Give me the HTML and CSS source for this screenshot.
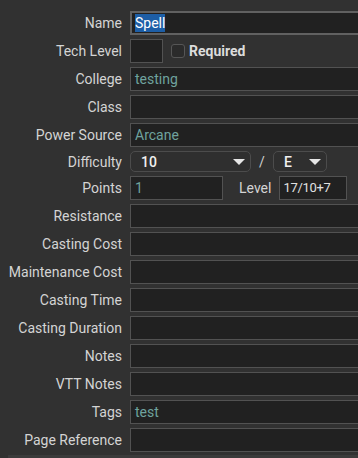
FILE: index.html
```html
<!DOCTYPE html>
<html lang="en">
<head>
    <meta charset="UTF-8">
    <meta name="viewport" content="width=device-width, initial-scale=1.0">
    <title>Spell Editor</title>
    <link rel="stylesheet" href="styles.css">
</head>
<body>

    <div class="form">
        <label class="label">Name</label>
        <div class="field focused"><span class="selected">Spell</span></div>

        <label class="label">Tech Level</label>
        <div class="inline">
            <div class="field tiny"></div>
            <span class="checkbox"></span>
            <span class="check-label">Required</span>
        </div>

        <label class="label">College</label>
        <div class="field hint">testing</div>

        <label class="label">Class</label>
        <div class="field"></div>

        <label class="label">Power Source</label>
        <div class="field hint">Arcane</div>

        <label class="label">Difficulty</label>
        <div class="inline">
            <div class="select wide">10<span class="arrow"></span></div>
            <span class="slash">/</span>
            <div class="select narrow">E<span class="arrow"></span></div>
        </div>

        <label class="label">Points</label>
        <div class="inline">
            <div class="field hint points">1</div>
            <span class="level-label">Level</span>
            <div class="field level">17/10+7</div>
        </div>

        <label class="label">Resistance</label>
        <div class="field"></div>

        <label class="label">Casting Cost</label>
        <div class="field"></div>

        <label class="label">Maintenance Cost</label>
        <div class="field"></div>

        <label class="label">Casting Time</label>
        <div class="field"></div>

        <label class="label">Casting Duration</label>
        <div class="field"></div>

        <label class="label">Notes</label>
        <div class="field"></div>

        <label class="label">VTT Notes</label>
        <div class="field"></div>

        <label class="label">Tags</label>
        <div class="field hint">test</div>

        <label class="label">Page Reference</label>
        <div class="field"></div>
    </div>

    <!-- panel edge peeking in at the bottom -->
    <div class="bottom-edge"></div>

</body>
</html>
```

FILE: styles.css
```css
body {
    margin: 0;
    background-color: #313131;
    color: #d4d4d4;
    font-family: Roboto, 'Liberation Sans', sans-serif;
    font-size: 14px;
    overflow: hidden;
    height: 458px;
}

.form {
    display: grid;
    grid-template-columns: 122px 240px;
    column-gap: 8px;
    row-gap: 4px;
    padding-top: 11px;
}

.label {
    text-align: right;
    align-self: center;
    white-space: nowrap;
}

.field {
    box-sizing: border-box;
    height: 24px;
    line-height: 22px;
    background-color: #212121;
    border: 1px solid #525252;
    padding: 0 4px;
    color: #e0e0e0;
    white-space: nowrap;
}

.field.focused {
    border: 2px solid #616161;
    line-height: 20px;
    padding: 0 3px;
}

.selected {
    background-color: #1d5ea6;
    color: #ffffff;
    padding: 1px 0;
}

.hint {
    color: #6fa39e;
}

.inline {
    display: flex;
    align-items: center;
}

.tiny {
    width: 33px;
}

.checkbox {
    box-sizing: border-box;
    width: 14px;
    height: 14px;
    margin-left: 8px;
    border: 1px solid #565656;
    border-radius: 3px;
    background-color: #2b2b2b;
}

.check-label {
    margin-left: 4px;
    font-weight: bold;
    color: #dcdcdc;
}

.select {
    box-sizing: border-box;
    height: 21px;
    display: flex;
    align-items: center;
    justify-content: space-between;
    padding: 0 5px 0 10px;
    background-color: #2f2f2f;
    border: 1px solid #4c4c4c;
    border-radius: 5px;
    color: #f0f0f0;
    font-weight: 500;
}

.select.wide {
    width: 121px;
}

.select.narrow {
    width: 54px;
}

.arrow {
    width: 0;
    height: 0;
    border-left: 6px solid transparent;
    border-right: 6px solid transparent;
    border-top: 6px solid #e6e6e6;
}

.slash {
    width: 22px;
    text-align: center;
    color: #cfcfcf;
}

.points {
    width: 93px;
}

.level-label {
    margin: 0 8px 0 16px;
}

.level {
    width: 68px;
    padding-left: 3px;
    font-size: 13px;
    letter-spacing: -0.3px;
}

.bottom-edge {
    margin: 3px 0 0 8px;
    height: 4px;
    background-color: #3b3b3b;
}
```
